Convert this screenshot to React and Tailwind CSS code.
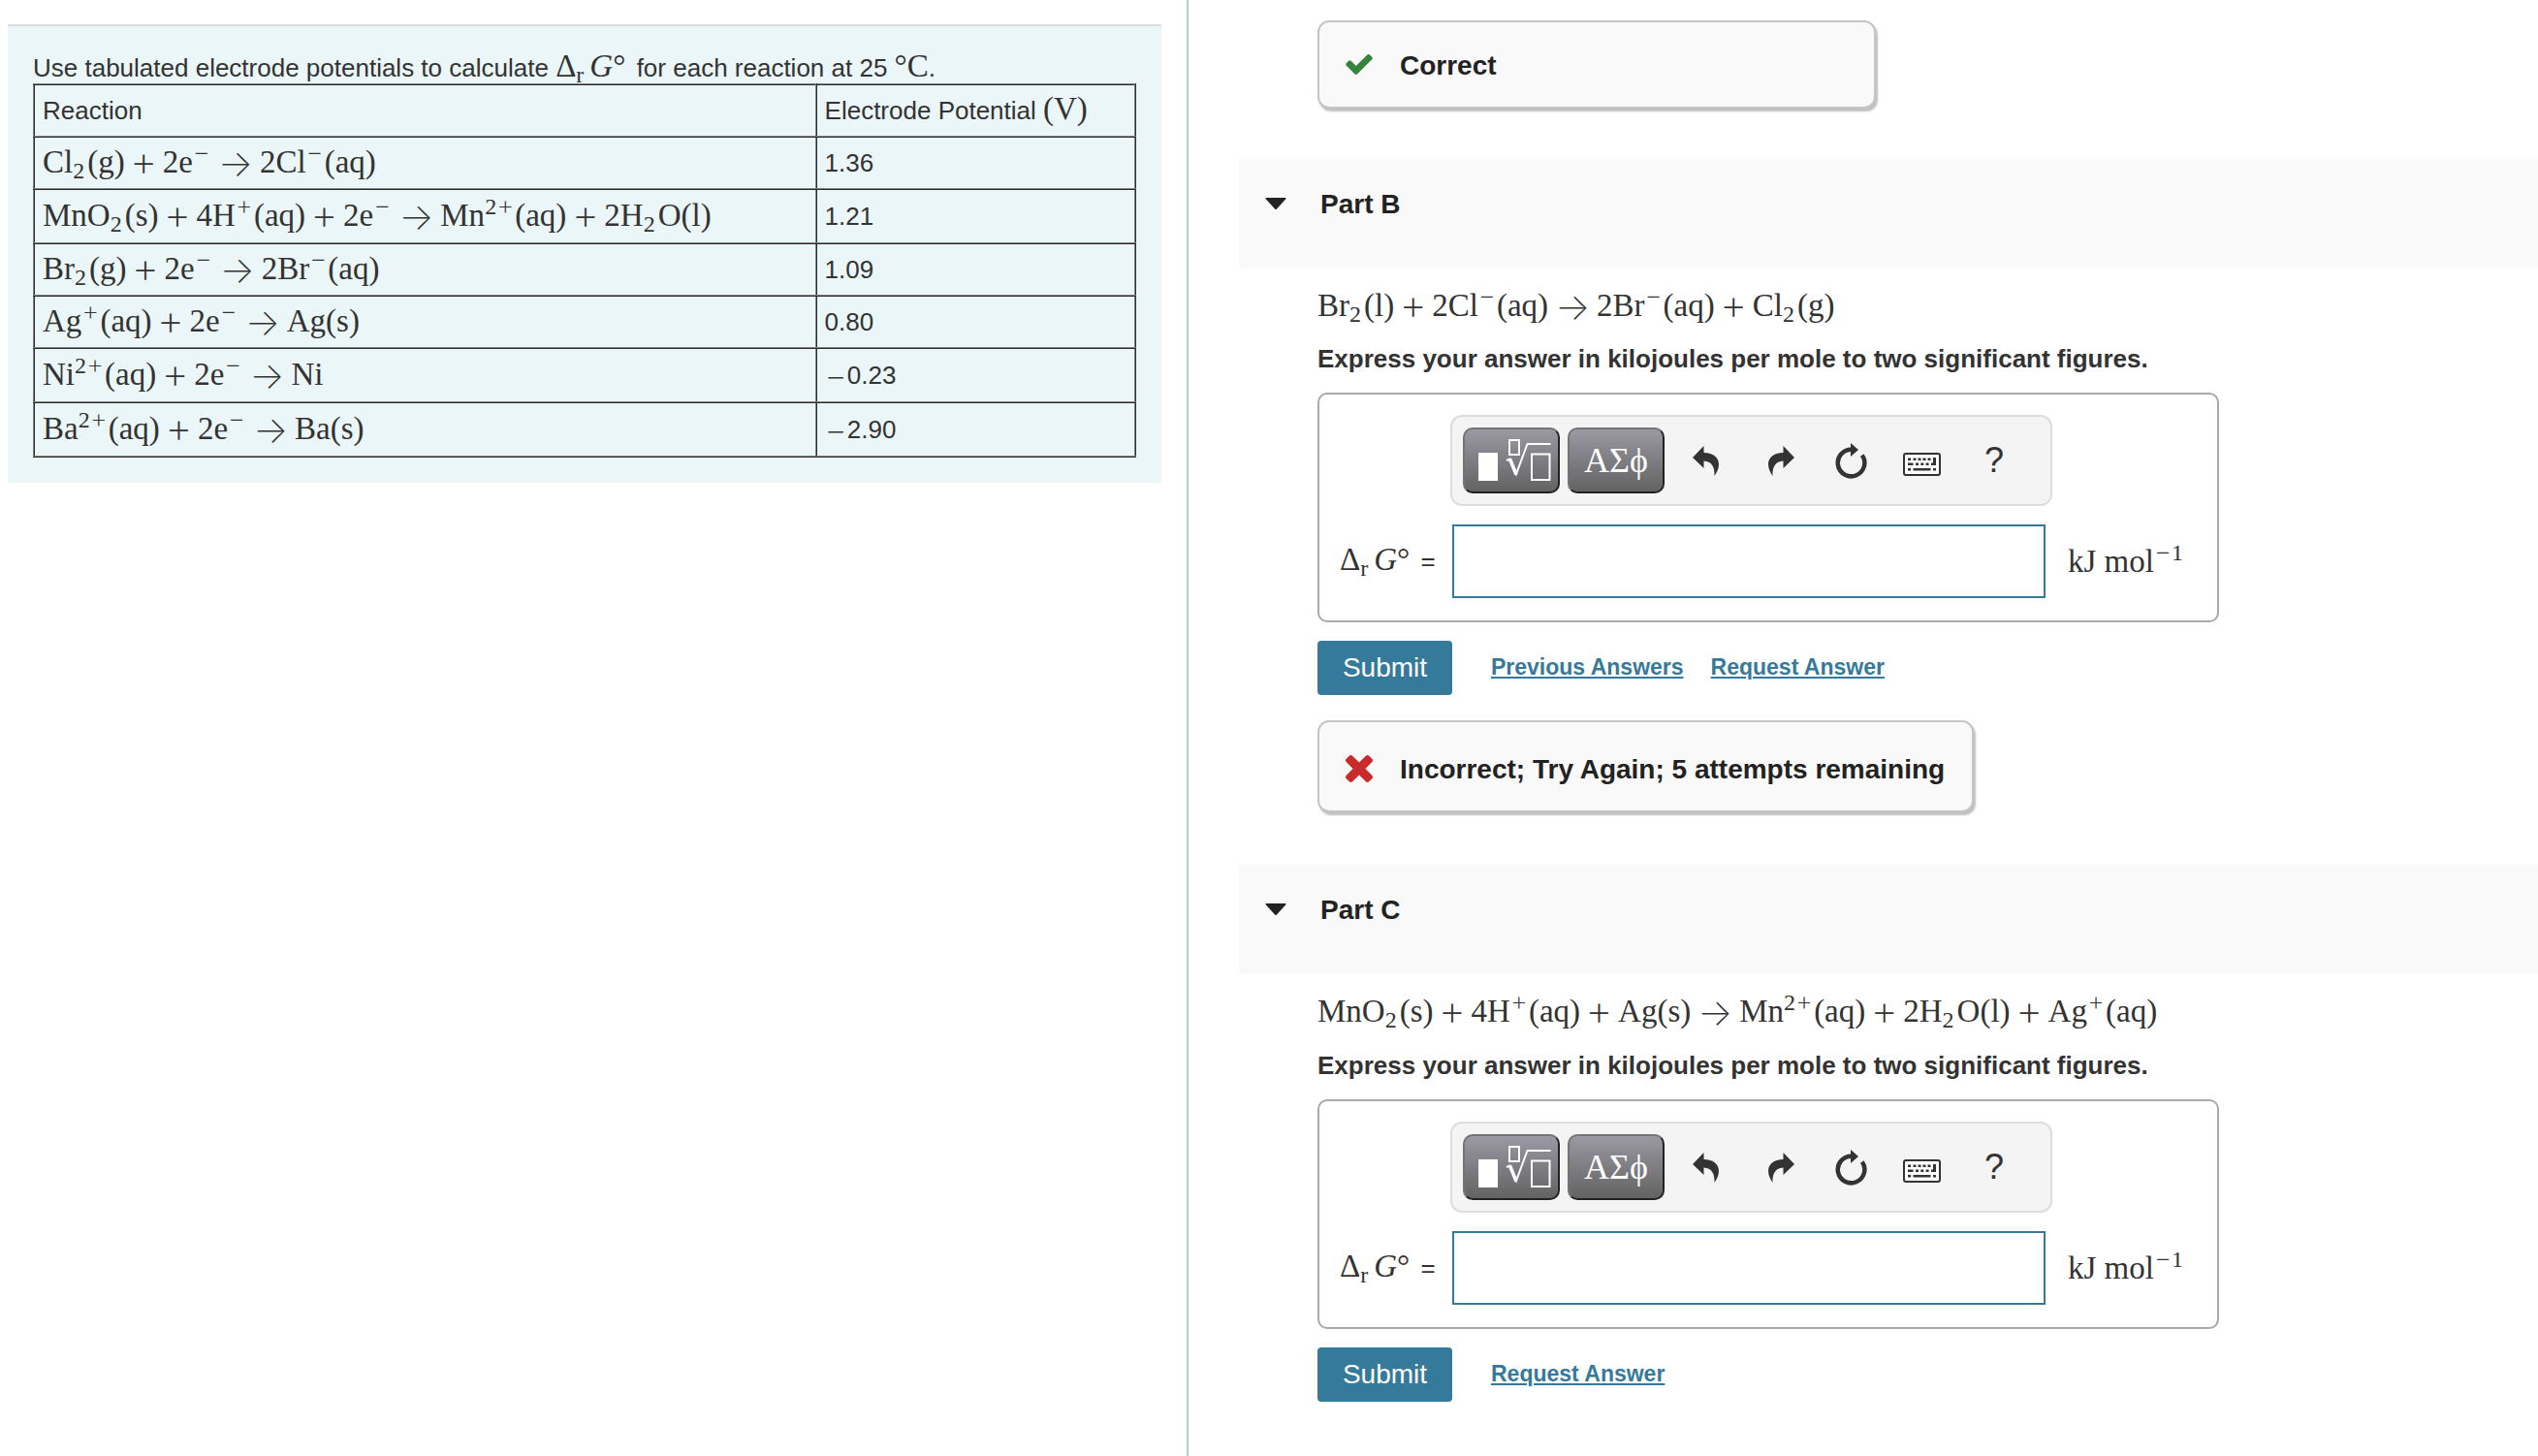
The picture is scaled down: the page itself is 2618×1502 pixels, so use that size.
import React from "react";

const SERIF = "font-['Liberation_Serif',serif]";
const OPERATOR = "font-['Inter',sans-serif] font-extralight leading-[0]";

function Plus() {
  return <span className={`${OPERATOR} inline-block w-[39px] text-center align-[-4px] text-[44px]`}>+</span>;
}

function Arrow() {
  return <span className={`${OPERATOR} inline-block w-[50px] text-center align-[-4px] text-[38px]`}>→</span>;
}

/* Turns "Cl_2(g) + 2e^- -> 2Cl^-(aq)" into formatted text. */
function Equation({ children }) {
  return (
    <span className={`${SERIF} whitespace-nowrap text-[33px]`}>
      {children.split(" ").map((word, i) => {
        if (word === "+") return <Plus key={i} />;
        if (word === "->") return <Arrow key={i} />;
        return (
          <span key={i}>
            {word.split(/(_\d|\^\d?[+-])/).map((part, j) => {
              if (part[0] === "_") {
                return <sub key={j} className="mr-[3px] text-[24px]">{part.slice(1)}</sub>;
              }
              if (part[0] === "^") {
                const sign = part.slice(-1) === "-" ? "−" : "+";
                return (
                  <sup key={j} className="mr-px text-[24px]">
                    {part.slice(1, -1)}
                    <span className={`${OPERATOR} text-[28px]`}>{sign}</span>
                  </sup>
                );
              }
              return part;
            })}
          </span>
        );
      })}
    </span>
  );
}

function DeltaG() {
  return (
    <span className={`${SERIF} mr-1 whitespace-nowrap text-[33px] leading-none`}>
      Δ<sub className="mr-1.5 text-[24px]">r</sub>
      <i>G</i>°
    </span>
  );
}

const potentials = [
  ["Cl_2(g) + 2e^- -> 2Cl^-(aq)", "1.36"],
  ["MnO_2(s) + 4H^+(aq) + 2e^- -> Mn^2+(aq) + 2H_2O(l)", "1.21"],
  ["Br_2(g) + 2e^- -> 2Br^-(aq)", "1.09"],
  ["Ag^+(aq) + 2e^- -> Ag(s)", "0.80"],
  ["Ni^2+(aq) + 2e^- -> Ni", "−0.23"],
  ["Ba^2+(aq) + 2e^- -> Ba(s)", "−2.90"],
];

const cell = "border-2 [border-style:ridge] border-[#808080] px-2 py-0 text-left font-normal leading-10";

function Problem() {
  return (
    <section className="ml-2 mr-[26px] mt-[25px] border-t-2 border-[#dddddd] bg-[#eaf6f8] px-[26px] pb-[26px] pt-[25px]">
      <p className="h-[34px] whitespace-nowrap leading-[34px]">
        Use tabulated electrode potentials to calculate <DeltaG />
        {" "}for each reaction at 25{" "}
        <span className={`${SERIF} text-[33px] leading-none`}>°C</span>.
      </p>
      <table className="w-full table-fixed border-collapse">
        <colgroup>
          <col />
          <col className="w-[29%]" />
        </colgroup>
        <thead>
          <tr className="h-[54px]">
            <th className={cell}>Reaction</th>
            <th className={cell}>
              Electrode Potential <span className={`${SERIF} text-[33px] leading-none`}>(V)</span>
            </th>
          </tr>
        </thead>
        <tbody>
          {potentials.map(([reaction, value]) => (
            <tr key={reaction} className={reaction.includes("^2+") ? "h-[56px]" : "h-[54px]"}>
              <td className={cell}>
                <Equation>{reaction}</Equation>
              </td>
              <td className={cell}>
                {value[0] === "−" ? (
                  <>
                    <span className={`${OPERATOR} align-[-4px] text-[36px]`}>−</span>
                    {value.slice(1)}
                  </>
                ) : (
                  value
                )}
              </td>
            </tr>
          ))}
        </tbody>
      </table>
    </section>
  );
}

function Feedback({ correct, className, children }) {
  return (
    <div
      className={`${className} flex items-center rounded-xl border-2 border-[#c5c5c5] bg-[#f9f9f9] pl-[27px] pr-7 text-[28px] font-bold text-[#222222] shadow-[2px_3px_2px_#c0c0c0]`}
    >
      {correct ? (
        <svg viewBox="121 336 1550 1186" className="h-[21px] w-7" fill="#36843c" aria-hidden="true">
          <path d="M1671 566q0 40-28 68l-724 724-136 136q-28 28-68 28t-68-28l-136-136-362-362q-28-28-28-68t28-68l136-136q28-28 68-28t68 28l294 295 656-657q28-28 68-28t68 28l136 136q28 28 28 68z" />
        </svg>
      ) : (
        <svg viewBox="302 366 1188 1188" className="h-7 w-7" fill="#ca2a2c" aria-hidden="true">
          <path d="M1490 1322q0 40-28 68l-136 136q-28 28-68 28t-68-28l-294-294-294 294q-28 28-68 28t-68-28l-136-136q-28-28-28-68t28-68l294-294-294-294q-28-28-28-68t28-68l136-136q28-28 68-28t68 28l294 294 294-294q28-28 68-28t68 28l136 136q28 28 28 68t-28 68l-294 294 294 294q28 28 28 68z" />
        </svg>
      )}
      <span className="ml-7 whitespace-nowrap pt-0.5">{children}</span>
    </div>
  );
}

const paletteButton =
  "flex h-[68px] w-[100px] items-center justify-center rounded-[10px] border-2 border-b-[#222222] border-l-[#747474] border-r-[#222222] border-t-[#747474] bg-linear-to-b from-[#9b99a3] to-[#636363] text-white";

function Toolbar() {
  return (
    <div className="flex h-[94px] w-[621px] items-center rounded-xl border-2 border-[#dddddd] bg-[#f4f4f4] pl-[11px] text-[#333333]">
      <button type="button" aria-label="Templates" className={paletteButton}>
        <svg viewBox="2 2 96 64" className="h-16 w-24" fill="none" stroke="#fff" strokeWidth="2" aria-hidden="true">
          <path d="M16 26h20v29H16z" fill="#fff" stroke="none" />
          <path d="M48 13h10v15H48z" />
          <path d="M71 27.5h18.500v26.500H71z" />
          <path d="M45 34l3.500-1.500 6.500 15.500L66.500 17H90.500" />
          <path d="M48.500 32.500l6.500 16" strokeWidth="3.500" />
        </svg>
      </button>
      <button type="button" aria-label="Symbols" className={`${paletteButton} ml-2`}>
        <span className={`${SERIF} text-[36px] leading-none`}>ΑΣϕ</span>
      </button>
      <button type="button" aria-label="Undo" className="ml-[29px]">
        <svg viewBox="0 0 28 31" className="h-[31px] w-7" fill="currentColor" aria-hidden="true">
          <path d="M0 12L11.500 0V7C21.500 7 27 12 27 19C27 24 24.500 28 22.500 31C23 21.500 19.500 16 11.500 15.500V23Z" />
        </svg>
      </button>
      <button type="button" aria-label="Redo" className="ml-[49px]">
        <svg viewBox="0 0 28 31" className="h-[31px] w-7" fill="currentColor" aria-hidden="true">
          <path d="M28 12L16.500 0V7C6.500 7 1 12 1 19C1 24 3.500 28 5.500 31C5 21.500 8.500 16 16.500 15.500V23Z" />
        </svg>
      </button>
      <button type="button" aria-label="Reset" className="ml-[42px]">
        <svg viewBox="0 0 33 37" className="h-[37px] w-[33px]" aria-hidden="true">
          <path d="M17 6.700A13.800 13.800 0 1 0 27.800 12.500" fill="none" stroke="currentColor" strokeWidth="4.500" />
          <path d="M16 0L24 7L16 14Z" fill="currentColor" />
        </svg>
      </button>
      <button type="button" aria-label="Keyboard shortcuts" className="ml-[37px] mt-2">
        <svg viewBox="0 0 39 24" className="h-6 w-[39px]" fill="currentColor" aria-hidden="true">
          <rect x="1" y="1" width="37" height="22" rx="2" fill="#fff" stroke="currentColor" strokeWidth="2" />
          <path d="M5 5.500h3v2.500h-3zM10.500 5.500h3v2.500h-3zM15.500 5.500h3v2.500h-3zM20.500 5.500h3v2.500h-3zM25.500 5.500h3v2.500h-3z" />
          <path d="M31 5h3v8h-5v-2.500h2zM5 10.500h5.500v2.500H5zM13 10.500h3v2.500h-3zM18.300 10.500h3v2.500h-3zM23.600 10.500h3v2.500h-3z" />
          <path d="M5 16h3v2.500h-3zM10.500 16h18v2.500h-18zM31 16h3v2.500h-3z" />
        </svg>
      </button>
      <button type="button" aria-label="Help" className="ml-[45px] text-[36px] leading-none">
        ?
      </button>
    </div>
  );
}

function AnswerBox({ id }) {
  return (
    <div className="mt-5 w-[930px] rounded-[10px] border-2 border-[#a9a9a9] bg-white pb-[23px] pl-[21px] pt-[21px]">
      <div className="pl-[114px]">
        <Toolbar />
      </div>
      <div className="mt-[19px] flex items-center">
        <label htmlFor={id} className="w-[116px] whitespace-nowrap text-[26px] leading-10">
          <DeltaG /> =
        </label>
        <input id={id} type="text" className="h-[76px] w-[612px] border-2 border-[#35799d] bg-white px-3 outline-none" />
        <span className={`${SERIF} ml-[23px] whitespace-nowrap text-[33px] leading-10`}>
          kJ mol
          <sup className="text-[24px]">
            <span className={`${OPERATOR} text-[28px]`}>−</span>1
          </sup>
        </span>
      </div>
    </div>
  );
}

function Part({ id, title, equation, tall, links, className, children }) {
  return (
    <section className={className}>
      <button type="button" aria-expanded="true" className="flex h-[113px] w-full items-start bg-[#f9f9f9] pl-[27px] pt-[29px] text-[28px] font-bold leading-9 text-[#222222]">
        <svg viewBox="0 0 22 12" className="mr-[35px] mt-[11px] h-3 w-[22px]" fill="currentColor" aria-hidden="true">
          <path d="M1 0h20q1 0 .5 1L12 11.500q-1 1-2 0L.5 1Q0 0 1 0z" />
        </svg>
        {title}
      </button>
      <div className="flex flex-col items-start pl-[81px]">
        <p className={tall ? "mt-[18px] h-[41px] leading-10" : "mt-[18px] h-10 leading-10"}>
          <Equation>{equation}</Equation>
        </p>
        <p className="mt-5 whitespace-nowrap font-bold leading-[30px]">
          Express your answer in kilojoules per mole to two significant figures.
        </p>
        <AnswerBox id={id} />
        <div className="mt-[19px] flex items-center">
          <button type="button" className="h-14 w-[139px] rounded-sm bg-[#35799b] text-[28px] text-white">
            Submit
          </button>
          <div className="ml-10 flex gap-7 pb-0.5 text-[23px] font-bold text-[#35799b]">
            {links.map((text) => (
              <a key={text} href="#" className="whitespace-nowrap underline decoration-2 underline-offset-2">
                {text}
              </a>
            ))}
          </div>
        </div>
        {children}
      </div>
    </section>
  );
}

export default function App() {
  return (
    <div className="grid min-h-screen grid-cols-[1226fr_1392fr] bg-white font-['Liberation_Sans',Arial,sans-serif] text-[26px] text-[#333333]">
      <div className="min-w-0 border-r-2 border-[#bac8da]">
        <Problem />
      </div>
      <main className="min-w-0 pl-[52px] pt-[21px]">
        <div className="pl-[81px]">
          <Feedback correct className="h-[91px] w-[576px]">Correct</Feedback>
        </div>
        <Part
          id="answer-b"
          className="mt-[52px]"
          title="Part B"
          equation="Br_2(l) + 2Cl^-(aq) -> 2Br^-(aq) + Cl_2(g)"
          links={["Previous Answers", "Request Answer"]}
        >
          <Feedback className="mt-[26px] h-[95px] pt-1">Incorrect; Try Again; 5 attempts remaining</Feedback>
        </Part>
        <Part
          id="answer-c"
          className="mt-[54px]"
          title="Part C"
          tall
          equation="MnO_2(s) + 4H^+(aq) + Ag(s) -> Mn^2+(aq) + 2H_2O(l) + Ag^+(aq)"
          links={["Request Answer"]}
        />
      </main>
    </div>
  );
}
